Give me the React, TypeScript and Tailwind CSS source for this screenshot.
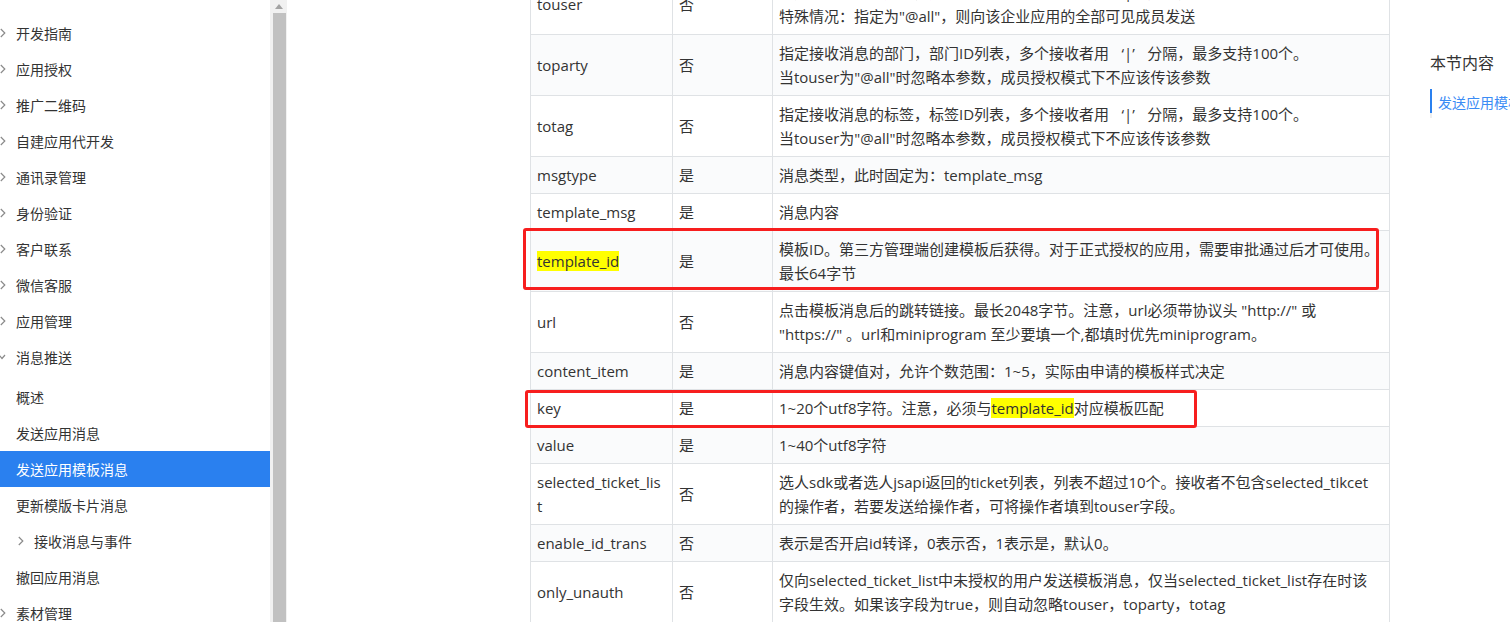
import React, { ReactNode } from "react";

const HL = ({ children }: { children: ReactNode }) => (
  <span className="bg-[#ffff00]">{children}</span>
);

const Bar = () => (
  <>
    <span className="inline-block w-[15px] text-right">‘</span>|
    <span className="inline-block w-[15px] text-left">’</span>
  </>
);

type Row = { name: ReactNode; req: string; desc: ReactNode[] };

const rows: Row[] = [
  {
    name: "touser",
    req: "否",
    desc: [
      <>
        指定接收消息的成员，成员ID列表（多个接收者用<Bar />分隔，最多支持1000个）。
      </>,
      "特殊情况：指定为\"@all\"，则向该企业应用的全部可见成员发送",
    ],
  },
  {
    name: "toparty",
    req: "否",
    desc: [
      <>
        指定接收消息的部门，部门ID列表，多个接收者用<Bar />分隔，最多支持100个。
      </>,
      "当touser为\"@all\"时忽略本参数，成员授权模式下不应该传该参数",
    ],
  },
  {
    name: "totag",
    req: "否",
    desc: [
      <>
        指定接收消息的标签，标签ID列表，多个接收者用<Bar />分隔，最多支持100个。
      </>,
      "当touser为\"@all\"时忽略本参数，成员授权模式下不应该传该参数",
    ],
  },
  { name: "msgtype", req: "是", desc: ["消息类型，此时固定为：template_msg"] },
  { name: "template_msg", req: "是", desc: ["消息内容"] },
  {
    name: <HL>template_id</HL>,
    req: "是",
    desc: [
      "模板ID。第三方管理端创建模板后获得。对于正式授权的应用，需要审批通过后才可使用。",
      "最长64字节",
    ],
  },
  {
    name: "url",
    req: "否",
    desc: [
      "点击模板消息后的跳转链接。最长2048字节。注意，url必须带协议头 \"http://\" 或",
      "\"https://\" 。url和miniprogram 至少要填一个,都填时优先miniprogram。",
    ],
  },
  {
    name: "content_item",
    req: "是",
    desc: ["消息内容键值对，允许个数范围：1~5，实际由申请的模板样式决定"],
  },
  {
    name: "key",
    req: "是",
    desc: [
      <>
        1~20个utf8字符。注意，必须与<HL>template_id</HL>对应模板匹配
      </>,
    ],
  },
  { name: "value", req: "是", desc: ["1~40个utf8字符"] },
  {
    name: (
      <>
        <span className="block">selected_ticket_lis</span>
        <span className="block">t</span>
      </>
    ),
    req: "否",
    desc: [
      "选人sdk或者选人jsapi返回的ticket列表，列表不超过10个。接收者不包含selected_tikcet",
      "的操作者，若要发送给操作者，可将操作者填到touser字段。",
    ],
  },
  {
    name: "enable_id_trans",
    req: "否",
    desc: ["表示是否开启id转译，0表示否，1表示是，默认0。"],
  },
  {
    name: "only_unauth",
    req: "否",
    desc: [
      "仅向selected_ticket_list中未授权的用户发送模板消息，仅当selected_ticket_list存在时该",
      "字段生效。如果该字段为true，则自动忽略touser，toparty，totag",
    ],
  },
];

const ChevRight = () => (
  <svg width="6" height="10" viewBox="0 0 6 10" className="block">
    <polyline points="0.8,1 4.8,5 0.8,9" fill="none" stroke="#8a8a8a" strokeWidth="1.2" />
  </svg>
);

const ChevDown = () => (
  <svg width="8" height="6" viewBox="0 0 8 6" className="block -ml-[2px]">
    <polyline points="1,1 4,4.5 7,1" fill="none" stroke="#8a8a8a" strokeWidth="1.2" />
  </svg>
);

type Nav = { label: string; kind: "right" | "down" | "none" | "subright"; active?: boolean };

const topNav: Nav[] = [
  { label: "开发指南", kind: "right" },
  { label: "应用授权", kind: "right" },
  { label: "推广二维码", kind: "right" },
  { label: "自建应用代开发", kind: "right" },
  { label: "通讯录管理", kind: "right" },
  { label: "身份验证", kind: "right" },
  { label: "客户联系", kind: "right" },
  { label: "微信客服", kind: "right" },
  { label: "应用管理", kind: "right" },
  { label: "消息推送", kind: "down" },
];

const subNav: Nav[] = [
  { label: "概述", kind: "none" },
  { label: "发送应用消息", kind: "none" },
  { label: "发送应用模板消息", kind: "none", active: true },
  { label: "更新模版卡片消息", kind: "none" },
  { label: "接收消息与事件", kind: "subright" },
  { label: "撤回应用消息", kind: "none" },
];

const NavItem = ({ item }: { item: Nav }) => {
  if (item.kind === "subright") {
    return (
      <div className="flex h-9 items-center pl-[18px] text-[#333]">
        <ChevRight />
        <span className="ml-[10px]">{item.label}</span>
      </div>
    );
  }
  return (
    <div
      className={
        item.active
          ? "flex h-9 items-center bg-[#2a80ef] text-white"
          : "flex h-9 items-center text-[#333]"
      }
    >
      <span className="flex w-4 items-center">
        {item.kind === "right" && <ChevRight />}
        {item.kind === "down" && <ChevDown />}
      </span>
      <span>{item.label}</span>
    </div>
  );
};

export default function App() {
  return (
    <div className="flex h-[622px] w-[1510px] overflow-hidden bg-white font-['Open_Sans','Noto_Sans_CJK_SC',sans-serif] text-[14px] text-[#333]">
      {/* Sidebar */}
      <aside className="w-[270px] shrink-0 pt-[15px] font-['Noto_Sans_CJK_SC',sans-serif]">
        {topNav.map((n) => (
          <NavItem key={n.label} item={n} />
        ))}
        <div className="pt-1">
          {subNav.map((n) => (
            <NavItem key={n.label} item={n} />
          ))}
        </div>
        <NavItem item={{ label: "素材管理", kind: "right" }} />
      </aside>

      {/* Scrollbar */}
      <div className="flex w-[17px] shrink-0 flex-col bg-[#f1f1f1]">
        <div className="flex h-[13px] items-center justify-center">
          <svg width="8" height="5" viewBox="0 0 8 5" className="block">
            <polygon points="4,0 8,5 0,5" fill="#a3a3a3" />
          </svg>
        </div>
        <div className="ml-[3px] mr-px flex-1 bg-[#c1c1c1]" />
      </div>

      {/* Main */}
      <main className="flex flex-1 items-start pl-[243px]">
        <div className="relative -mt-[27px] w-[859px] shrink-0">
          <table className="w-[859px] table-fixed border-collapse text-[15px] leading-6">
            <colgroup>
              <col className="w-[142px]" />
              <col className="w-[100px]" />
              <col className="w-[617px]" />
            </colgroup>
            <tbody>
              {rows.map((r, i) => (
                <tr key={i} className={i % 2 === 1 ? "bg-[#fafbfc]" : "bg-white"}>
                  <td className="whitespace-nowrap border border-[#dfe2e5] px-[6px] py-[6px] align-middle">
                    {r.name}
                  </td>
                  <td className="border border-[#dfe2e5] px-[6px] py-[6px] align-middle">{r.req}</td>
                  <td className="border border-[#dfe2e5] px-[6px] py-[6px] align-middle">
                    {r.desc.map((d, j) => (
                      <span key={j} className="block whitespace-nowrap">
                        {d}
                      </span>
                    ))}
                  </td>
                </tr>
              ))}
            </tbody>
          </table>
          {/* annotation boxes */}
          <div className="pointer-events-none absolute left-[-7px] top-[255px] h-[62px] w-[856px] rounded-[3px] border-[3px] border-[#f71e1e]" />
          <div className="pointer-events-none absolute left-[-5px] top-[417px] h-[38px] w-[672px] rounded-[3px] border-[3px] border-[#f71e1e]" />
        </div>

        {/* TOC */}
        <div className="ml-[41px] shrink-0 whitespace-nowrap pt-[50px] font-['Noto_Sans_CJK_SC',sans-serif]">
          <div className="text-[16px] leading-6 text-[#333]">本节内容</div>
          <div className="mt-[15px] border-l-2 border-[#eeeeee] pb-[5px]">
            <div className="-ml-[2px] border-l-2 border-[#2a80ef] pl-[6px] pt-[2px] leading-[22px] text-[#3b8cf5]">
              发送应用模板消息
            </div>
          </div>
        </div>
      </main>
    </div>
  );
}
